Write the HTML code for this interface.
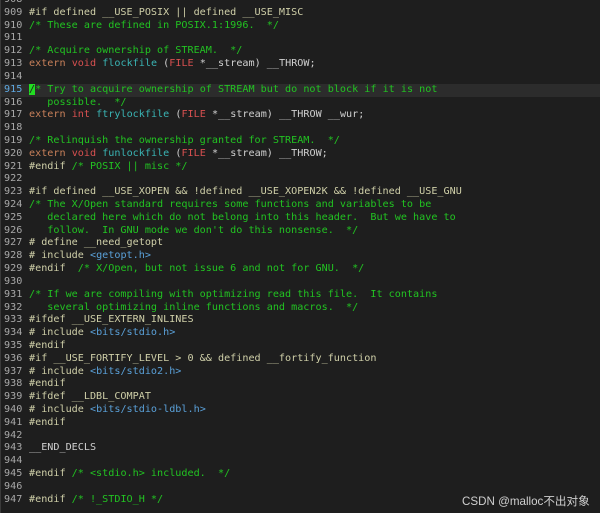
<!DOCTYPE html><html><head><meta charset="utf-8"><style>
html,body{margin:0;padding:0;background:#1e1e1e;width:600px;height:513px;overflow:hidden}
#c{position:absolute;left:0;top:-6px;font-family:"DejaVu Sans Mono","Liberation Mono",monospace;font-size:10.13px;line-height:12.82px;color:#d0d0d0}
.l{height:12.82px;white-space:pre}
.n{color:#a8a8a8;display:inline-block;width:29px;padding-left:4px;box-sizing:border-box}
.cur{background:#2c2c2c;width:600px}
.cur .n{color:#5fa8e0}
.p{color:#cfcfa8}.c{color:#22c322}.e{color:#c8805a}.t{color:#d85050}.f{color:#3ab4b4}.s{color:#5aa0d8}.k{background:#22dd22;color:#1e1e1e}
#edge{position:absolute;left:0;top:0;width:1px;height:513px;background:#3a3a3a}
#wm{position:absolute;left:462px;top:493px;font-family:"Liberation Sans","Noto Sans CJK SC",sans-serif;font-size:11.6px;color:#cfcfcf;white-space:nowrap}
</style></head><body><div id="c"><div class="l"><span class="n">908</span></div><div class="l"><span class="n">909</span><span class="p">#if defined __USE_POSIX || defined __USE_MISC</span></div><div class="l"><span class="n">910</span><span class="c">/* These are defined in POSIX.1:1996.  */</span></div><div class="l"><span class="n">911</span></div><div class="l"><span class="n">912</span><span class="c">/* Acquire ownership of STREAM.  */</span></div><div class="l"><span class="n">913</span><span class="e">extern</span> <span class="t">void</span> <span class="f">flockfile</span> (<span class="t">FILE</span> *__stream) __THROW;</div><div class="l"><span class="n">914</span></div><div class="l cur"><span class="n">915</span><span class="k">/</span><span class="c">* Try to acquire ownership of STREAM but do not block if it is not</span></div><div class="l"><span class="n">916</span><span class="c">   possible.  */</span></div><div class="l"><span class="n">917</span><span class="e">extern</span> <span class="t">int</span> <span class="f">ftrylockfile</span> (<span class="t">FILE</span> *__stream) __THROW __wur;</div><div class="l"><span class="n">918</span></div><div class="l"><span class="n">919</span><span class="c">/* Relinquish the ownership granted for STREAM.  */</span></div><div class="l"><span class="n">920</span><span class="e">extern</span> <span class="t">void</span> <span class="f">funlockfile</span> (<span class="t">FILE</span> *__stream) __THROW;</div><div class="l"><span class="n">921</span><span class="p">#endif </span><span class="c">/* POSIX || misc */</span></div><div class="l"><span class="n">922</span></div><div class="l"><span class="n">923</span><span class="p">#if defined __USE_XOPEN &amp;&amp; !defined __USE_XOPEN2K &amp;&amp; !defined __USE_GNU</span></div><div class="l"><span class="n">924</span><span class="c">/* The X/Open standard requires some functions and variables to be</span></div><div class="l"><span class="n">925</span><span class="c">   declared here which do not belong into this header.  But we have to</span></div><div class="l"><span class="n">926</span><span class="c">   follow.  In GNU mode we don't do this nonsense.  */</span></div><div class="l"><span class="n">927</span><span class="p"># define __need_getopt</span></div><div class="l"><span class="n">928</span><span class="p"># include </span><span class="s">&lt;getopt.h&gt;</span></div><div class="l"><span class="n">929</span><span class="p">#endif  </span><span class="c">/* X/Open, but not issue 6 and not for GNU.  */</span></div><div class="l"><span class="n">930</span></div><div class="l"><span class="n">931</span><span class="c">/* If we are compiling with optimizing read this file.  It contains</span></div><div class="l"><span class="n">932</span><span class="c">   several optimizing inline functions and macros.  */</span></div><div class="l"><span class="n">933</span><span class="p">#ifdef __USE_EXTERN_INLINES</span></div><div class="l"><span class="n">934</span><span class="p"># include </span><span class="s">&lt;bits/stdio.h&gt;</span></div><div class="l"><span class="n">935</span><span class="p">#endif</span></div><div class="l"><span class="n">936</span><span class="p">#if __USE_FORTIFY_LEVEL &gt; 0 &amp;&amp; defined __fortify_function</span></div><div class="l"><span class="n">937</span><span class="p"># include </span><span class="s">&lt;bits/stdio2.h&gt;</span></div><div class="l"><span class="n">938</span><span class="p">#endif</span></div><div class="l"><span class="n">939</span><span class="p">#ifdef __LDBL_COMPAT</span></div><div class="l"><span class="n">940</span><span class="p"># include </span><span class="s">&lt;bits/stdio-ldbl.h&gt;</span></div><div class="l"><span class="n">941</span><span class="p">#endif</span></div><div class="l"><span class="n">942</span></div><div class="l"><span class="n">943</span>__END_DECLS</div><div class="l"><span class="n">944</span></div><div class="l"><span class="n">945</span><span class="p">#endif </span><span class="c">/* &lt;stdio.h&gt; included.  */</span></div><div class="l"><span class="n">946</span></div><div class="l"><span class="n">947</span><span class="p">#endif </span><span class="c">/* !_STDIO_H */</span></div></div><div id="edge"></div><div id="wm">CSDN @malloc不出对象</div></body></html>
